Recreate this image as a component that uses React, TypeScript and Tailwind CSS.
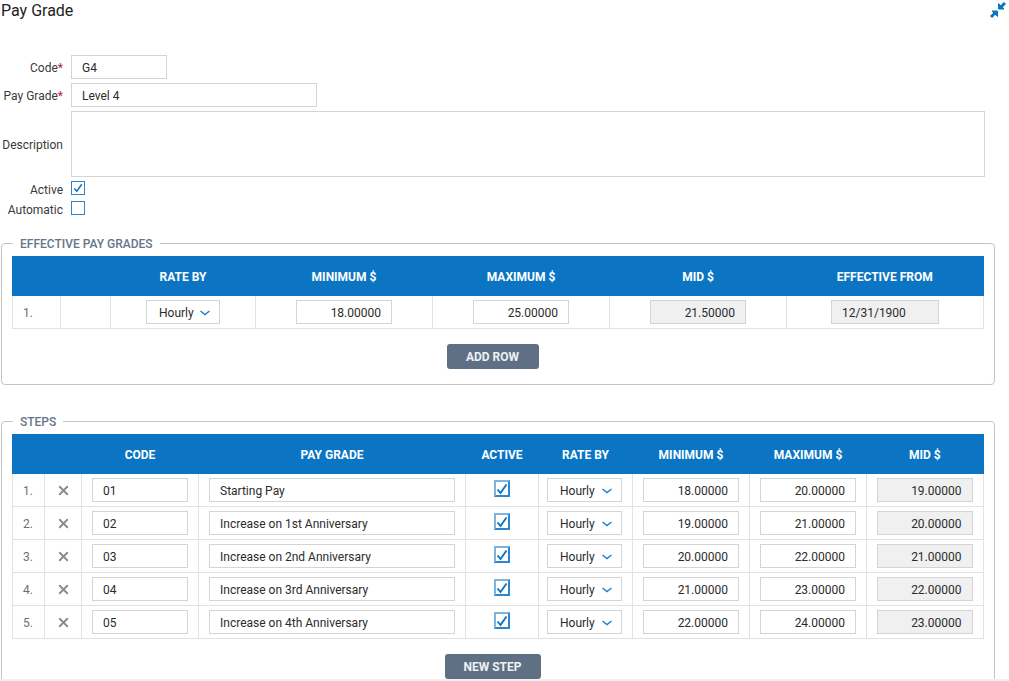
import React from 'react';
import { X } from 'lucide-react';

const effectiveHeaders = ['', '', 'RATE BY', 'MINIMUM $', 'MAXIMUM $', 'MID $', 'EFFECTIVE FROM'];
const stepHeaders = ['', '', 'CODE', 'PAY GRADE', 'ACTIVE', 'RATE BY', 'MINIMUM $', 'MAXIMUM $', 'MID $'];

const steps = [
  { code: '01', name: 'Starting Pay', min: '18.00000', max: '20.00000', mid: '19.00000' },
  { code: '02', name: 'Increase on 1st Anniversary', min: '19.00000', max: '21.00000', mid: '20.00000' },
  { code: '03', name: 'Increase on 2nd Anniversary', min: '20.00000', max: '22.00000', mid: '21.00000' },
  { code: '04', name: 'Increase on 3rd Anniversary', min: '21.00000', max: '23.00000', mid: '22.00000' },
  { code: '05', name: 'Increase on 4th Anniversary', min: '22.00000', max: '24.00000', mid: '23.00000' },
];

const Field = ({ value, className = '' }: { value: string; className?: string }) => (
  <div className={`h-6 border border-[#d4d4d4] pl-[10px] leading-[25px] text-xs text-[#2b2b2b] ${className}`}>{value}</div>
);

const NumberBox = ({ value, readOnly = false }: { value: string; readOnly?: boolean }) => (
  <div className={`mx-auto h-6 w-24 border border-[#d4d4d4] pr-[10px] text-right leading-[25px] text-xs text-[#2b2b2b] ${readOnly ? 'bg-[#f0f0f0]' : 'bg-white'}`}>
    {value}
  </div>
);

const RateSelect = ({ width }: { width: string }) => (
  <div className={`mx-auto flex h-6 items-center justify-between border border-[#d4d4d4] pl-3 pr-[8px] text-xs text-[#2b2b2b] ${width}`}>
    <span className="pt-[2px]">Hourly</span>
    <svg width="12" height="8" viewBox="0 0 12 8" fill="none" stroke="#1b7fd0" strokeWidth="1.4" className="mt-[2px]">
      <path d="M1.5 2 L6 5.5 L10.5 2" />
    </svg>
  </div>
);

const Checkbox = ({ checked, large = false }: { checked: boolean; large?: boolean }) => (
  <div className={`flex items-center justify-center bg-white ${large ? 'mx-auto mb-[3px] h-[17px] w-[16px] border-2 border-[#2f86cf] border-t-[#7fb3e0] border-l-[#7fb3e0]' : 'h-[14px] w-[14px] border border-[#2f86cf]'}`}>
    {checked && (
      <svg width={large ? 12 : 10} height={large ? 12 : 10} viewBox="0 0 12 12" fill="none" stroke="#0b75c4" strokeWidth="1.9">
        <path d="M1.5 6.5 L4.5 10 L10.5 1.5" />
      </svg>
    )}
  </div>
);

const HeaderRow = ({ labels }: { labels: string[] }) => (
  <thead>
    <tr className="h-[39px] bg-[#0b75c4] text-xs font-bold text-white">
      {labels.map((label, i) => (
        <th key={i} className="border-y border-[#0b75c4] first:border-l last:border-r p-0 pt-[2px] text-center font-bold">{label}</th>
      ))}
    </tr>
  </thead>
);

const cell = 'border border-[#e2e2e2] p-0';
const rowNumber = 'border border-[#e2e2e2] p-0 pl-[10px] pt-[2px] text-[#6f6f6f]';

const PayButton = ({ label, width }: { label: string; width: string }) => (
  <div className="flex justify-center pr-[11px]">
    <button className={`h-[25px] rounded-[3px] bg-[#607084] text-xs font-bold text-[#eef1f4] ${width}`}>{label}</button>
  </div>
);

const FieldLabel = ({ children, checkRow = false }: { children: React.ReactNode; checkRow?: boolean }) => (
  <label className={`w-[63px] whitespace-nowrap text-right text-[#3a3a3a] ${checkRow ? 'pt-[4px]' : 'pt-[2px]'}`}>{children}</label>
);

const FieldsetLegend = ({ children }: { children: React.ReactNode }) => (
  <legend className="ml-[1px] translate-y-px px-[7px] text-xs font-medium leading-[14px] text-[#66758a]">{children}</legend>
);

export default function App() {
  return (
    <div className="relative h-[681px] w-[1009px] overflow-hidden bg-white font-['Roboto',sans-serif] text-xs text-[#333]">
      {/* Title */}
      <div className="flex items-start justify-between pl-[1px] pr-[3px] pt-[2px]">
        <h1 className="text-base font-normal leading-[17px] text-[#222]">Pay Grade</h1>
        <svg width="16" height="16" viewBox="0 0 16 16" fill="#0b75c4" stroke="#0b75c4">
          <path d="M8.5 1.5 L14 7 L8.5 7 Z" strokeWidth="1" />
          <path d="M11 5 L15 1" strokeWidth="3" />
          <path d="M7.5 14.5 L2 9 L7.5 9 Z" strokeWidth="1" />
          <path d="M5 11 L1 15" strokeWidth="3" />
        </svg>
      </div>

      {/* Form */}
      <div className="mt-[36px] flex flex-col">
        <div className="flex h-6 items-center">
          <FieldLabel>Code<span className="text-[#b3242c]">*</span></FieldLabel>
          <Field value="G4" className="ml-2 w-24" />
        </div>
        <div className="mt-1 flex h-6 items-center">
          <FieldLabel>Pay Grade<span className="text-[#b3242c]">*</span></FieldLabel>
          <Field value="Level 4" className="ml-2 w-[246px]" />
        </div>
        <div className="mt-1 flex h-[66px] items-center">
          <FieldLabel>Description</FieldLabel>
          <div className="ml-2 h-[66px] w-[914px] border border-[#d4d4d4]" />
        </div>
        <div className="mt-1 flex h-[14px] items-center">
          <FieldLabel checkRow>Active</FieldLabel>
          <div className="ml-2"><Checkbox checked /></div>
        </div>
        <div className="mt-[6px] flex h-[14px] items-center">
          <FieldLabel checkRow>Automatic</FieldLabel>
          <div className="ml-2"><Checkbox checked={false} /></div>
        </div>
      </div>

      {/* Effective pay grades */}
      <fieldset className="ml-[1px] mt-[21px] h-[149px] w-[993px] rounded border border-[#c4c4c4] px-[10px] pt-[6px]">
        <FieldsetLegend>EFFECTIVE PAY GRADES</FieldsetLegend>
        <table className="w-[971px] table-fixed border-collapse">
          <colgroup>
            <col className="w-[48px]" />
            <col className="w-[50px]" />
            <col className="w-[145px]" />
            <col className="w-[177px]" />
            <col className="w-[177px]" />
            <col className="w-[177px]" />
            <col className="w-[197px]" />
          </colgroup>
          <HeaderRow labels={effectiveHeaders} />
          <tbody>
            <tr className="h-[33px]">
              <td className={rowNumber}>1.</td>
              <td className={cell} />
              <td className={cell}><RateSelect width="w-[74px]" /></td>
              <td className={cell}><NumberBox value="18.00000" /></td>
              <td className={cell}><NumberBox value="25.00000" /></td>
              <td className={cell}><NumberBox value="21.50000" readOnly /></td>
              <td className={cell}>
                <div className="ml-[44px] h-6 w-[108px] border border-[#d4d4d4] bg-[#f0f0f0] pl-[10px] leading-[25px] text-[#2b2b2b]">12/31/1900</div>
              </td>
            </tr>
          </tbody>
        </table>
        <div className="mt-[15px]"><PayButton label="ADD ROW" width="w-[92px]" /></div>
      </fieldset>

      {/* Steps */}
      <fieldset className="ml-[1px] mt-[29px] h-[300px] w-[993px] rounded border border-[#c4c4c4] px-[10px] pt-[6px]">
        <FieldsetLegend>STEPS</FieldsetLegend>
        <table className="w-[971px] table-fixed border-collapse">
          <colgroup>
            <col className="w-[32px]" />
            <col className="w-[37px]" />
            <col className="w-[117px]" />
            <col className="w-[267px]" />
            <col className="w-[73px]" />
            <col className="w-[94px]" />
            <col className="w-[117px]" />
            <col className="w-[117px]" />
            <col className="w-[117px]" />
          </colgroup>
          <HeaderRow labels={stepHeaders} />
          <tbody>
            {steps.map((step, i) => (
              <tr key={step.code} className="h-[33px]">
                <td className={rowNumber}>{i + 1}.</td>
                <td className={cell}><X size={15} strokeWidth={3} className="mx-auto text-[#8c8c8c]" /></td>
                <td className={cell}><Field value={step.code} className="mx-auto w-24" /></td>
                <td className={cell}><Field value={step.name} className="mx-auto w-[246px]" /></td>
                <td className={`${cell} pr-px`}><Checkbox checked large /></td>
                <td className={`${cell} pr-[2px]`}><RateSelect width="w-[75px]" /></td>
                <td className={cell}><NumberBox value={step.min} /></td>
                <td className={cell}><NumberBox value={step.max} /></td>
                <td className={`${cell} pr-px`}><NumberBox value={step.mid} readOnly /></td>
              </tr>
            ))}
          </tbody>
        </table>
        <div className="mt-[15px]"><PayButton label="NEW STEP" width="w-[96px]" /></div>
      </fieldset>

      <div className="absolute bottom-0 left-0 h-[2px] w-full bg-[#f1f1f1]" />
    </div>
  );
}
